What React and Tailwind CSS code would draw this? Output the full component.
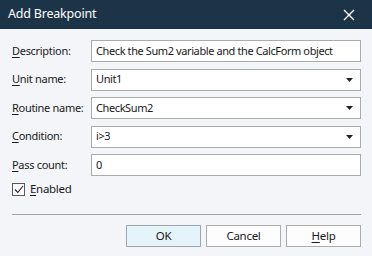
import React from "react";

const FONT = { fontFamily: '"Noto Sans", "Open Sans", sans-serif' };

const Key = ({ children }) => <span className="underline underline-offset-2">{children}</span>;

const TextBox = ({ value }) => (
  <div className="h-[22px] bg-white border border-[#a9abad] flex items-center pl-[4px] text-[11px] tracking-[-0.4px] text-[#1a1a1a] whitespace-nowrap overflow-hidden">
    {value}
  </div>
);

const ComboBox = ({ value }) => (
  <div className="h-[22px] bg-white border border-[#a9abad] flex items-center justify-between pl-[4px] pr-[7px] text-[11px] tracking-[-0.4px] text-[#1a1a1a]">
    <span>{value}</span>
    <svg width="7" height="4" viewBox="0 0 7 4">
      <path d="M0 0 H7 L3.5 4 Z" fill="#222" />
    </svg>
  </div>
);

const Button = ({ children, primary }) => (
  <button
    className={`w-[75px] h-[22px] border text-[11.5px] tracking-[-0.3px] text-[#1a1a1a] flex items-center justify-center ${
      primary ? "bg-[#e5f3fb] border-[#9fa6ad]" : "bg-[#fdfdfd] border-[#adadad]"
    }`}
  >
    {children}
  </button>
);

export default function App() {
  const rows = [
    { label: <><Key>D</Key>escription:</>, field: <TextBox value="Check the Sum2 variable and the CalcForm object" /> },
    { label: <><Key>U</Key>nit name:</>, field: <ComboBox value="Unit1" /> },
    { label: <><Key>R</Key>outine name:</>, field: <ComboBox value="CheckSum2" /> },
    { label: <><Key>C</Key>ondition:</>, field: <ComboBox value="i>3" /> },
    { label: <><Key>P</Key>ass count:</>, field: <TextBox value="0" /> },
  ];

  return (
    <div className="w-[372px] h-[256px] bg-[#f3f5f8] flex flex-col overflow-hidden" style={FONT}>
      {/* Title bar */}
      <div className="h-[29px] bg-[#1c3447] flex items-center justify-between pl-[8px] pr-[17px] shrink-0">
        <span className="text-white text-[12.5px] tracking-[-0.2px]">Add Breakpoint</span>
        <svg width="12" height="12" viewBox="0 0 12 12">
          <path d="M1 1 L11 11 M11 1 L1 11" stroke="#fff" strokeWidth="1.4" />
        </svg>
      </div>

      <div className="pl-[12px] pr-[11px] pt-[11px] flex flex-col">
        <div className="grid grid-cols-[79px_1fr] gap-y-[6.5px] items-center">
          {rows.map((r, i) => (
            <React.Fragment key={i}>
              <div className="text-[11px] tracking-[-0.3px] text-[#1a1a1a] whitespace-nowrap">{r.label}</div>
              {r.field}
            </React.Fragment>
          ))}
        </div>

        <div className="flex items-center gap-[5px] mt-[6px] h-[14px]">
          <div className="w-[13px] h-[13px] border border-[#5a5a5a] bg-white flex items-center justify-center">
            <svg width="10" height="9" viewBox="0 0 10 9">
              <path d="M1 4.5 L3.8 7.5 L9 1" stroke="#222" strokeWidth="1.1" fill="none" />
            </svg>
          </div>
          <span className="text-[11.5px] tracking-[-0.3px] text-[#1a1a1a]"><Key>E</Key>nabled</span>
        </div>

        <div className="h-px bg-[#a0a4a8] mt-[18px]" />

        <div className="flex justify-end gap-[5px] mt-[10px]">
          <Button primary>OK</Button>
          <Button>Cancel</Button>
          <Button><Key>H</Key>elp</Button>
        </div>
      </div>
    </div>
  );
}
